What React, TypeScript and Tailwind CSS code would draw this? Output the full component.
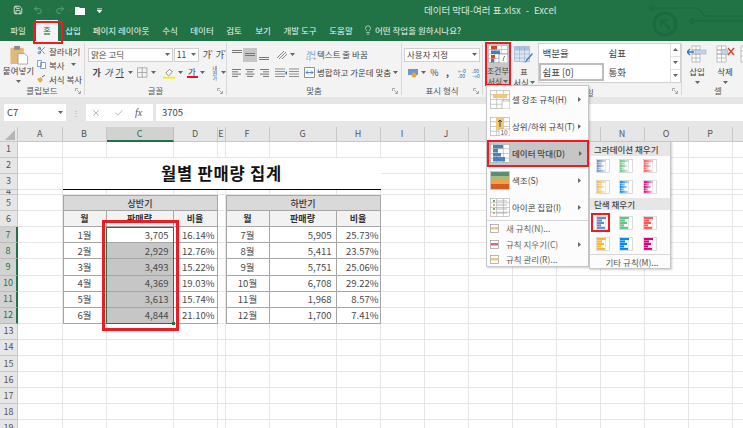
// Excel ribbon with the conditional formatting > data bars menu open
import type { ReactNode } from "react";
import { Check, Lightbulb, Redo2, Save, Scissors, Undo2, X } from "lucide-react";

const letters = ["A", "B", "C", "D", "E", "F", "G", "H", "I", "J", "K", "L", "M", "N", "O", "P", ""];
const rows = Array.from({ length: 19 }, (_, i) => i + 1);

const firstHalf = [
  ["1월", "3,705", "16.14%"],
  ["2월", "2,929", "12.76%"],
  ["3월", "3,493", "15.22%"],
  ["4월", "4,369", "19.03%"],
  ["5월", "3,613", "15.74%"],
  ["6월", "4,844", "21.10%"],
];

const secondHalf = [
  ["7월", "5,905", "25.73%"],
  ["8월", "5,411", "23.57%"],
  ["9월", "5,751", "25.06%"],
  ["10월", "6,708", "29.22%"],
  ["11월", "1,968", "8.57%"],
  ["12월", "1,700", "7.41%"],
];

const tabs = [
  { label: "삽입", w: "w-[30px]" },
  { label: "페이지 레이아웃", w: "w-[66px]" },
  { label: "수식", w: "w-[32px]" },
  { label: "데이터", w: "w-[32px]" },
  { label: "검토", w: "w-[32px]" },
  { label: "보기", w: "w-[26px]" },
  { label: "개발 도구", w: "w-[48px]" },
  { label: "도움말", w: "w-[34px]" },
];

const barColors = ["#638ec6", "#63c384", "#ff555a", "#ffb628", "#008aef", "#d6007b"];

function Caret({ className = "" }: { className?: string }) {
  return (
    <svg width="5" height="3" viewBox="0 0 5 3" className={`shrink-0 ${className}`}>
      <path d="M0 0h5L2.5 3z" fill="#666" />
    </svg>
  );
}

function Launcher() {
  return (
    <svg width="6" height="6" viewBox="0 0 6 6" className="absolute right-[3px] bottom-[1px]">
      <path d="M.5 3V.5H3M5.5 3v2.5H3M2 2l3 3" fill="none" stroke="#888" strokeWidth=".7" />
    </svg>
  );
}

function Group({ width, label, children }: { width: string; label: string; children: ReactNode }) {
  return (
    <div className={`${width} relative flex flex-col border-r border-[#d8d8d8] shrink-0 my-[2px]`}>
      <div className="h-[45px]">{children}</div>
      <div className="text-center text-[8.5px] leading-[9px] text-[#555]">{label}</div>
      <Launcher />
    </div>
  );
}

function Combo({ width, text }: { width: string; text: string }) {
  return (
    <div className={`${width} h-[14px] bg-white border border-[#d0d0d0] flex items-center justify-between px-[2px] text-[8.5px] text-[#444]`}>
      <span>{text}</span>
      <Caret />
    </div>
  );
}

function HLines({ align }: { align: "l" | "c" | "r" }) {
  const x = (w: number) => (align === "l" ? 1 : align === "c" ? (12 - w) / 2 : 11 - w);
  return (
    <svg width="12" height="10" viewBox="0 0 12 10">
      {[9, 6, 9, 6].map((w, i) => (
        <rect key={i} x={x(w)} y={1 + i * 2.3} width={w} height="1" fill="#777" />
      ))}
    </svg>
  );
}

function VLines({ pos }: { pos: number }) {
  return (
    <svg width="12" height="12" viewBox="0 0 12 12">
      <rect x="1" y={pos} width="10" height="1" fill="#777" />
      <rect x="1" y={pos + 2} width="10" height="1" fill="#777" />
    </svg>
  );
}

function CellGrid({ w = 20, h = 18 }: { w?: number; h?: number }) {
  const cx = w / 3;
  const cy = h / 4;
  return (
    <g stroke="#a8a8a8" strokeWidth=".6" fill="#fff">
      <rect x=".5" y=".5" width={w - 1} height={h - 1} />
      {[1, 2].map((i) => (
        <path key={i} d={`M${cx * i} .5V${h - 0.5}`} />
      ))}
      {[1, 2, 3].map((i) => (
        <path key={i} d={`M.5 ${cy * i}H${w - 0.5}`} />
      ))}
    </g>
  );
}

function DataBarIcon({ color, gradient, id }: { color: string; gradient?: boolean; id: string }) {
  return (
    <svg width="14" height="14" viewBox="0 0 14 14">
      <defs>
        <linearGradient id={id}>
          <stop offset="0" stopColor={color} />
          <stop offset="1" stopColor={color} stopOpacity=".25" />
        </linearGradient>
      </defs>
      <rect x=".5" y=".5" width="13" height="13" fill="#fff" stroke="#c4c4c4" strokeWidth=".6" />
      <path d="M5 .5V13.500M9.500 .5V13.500" stroke="#d0d0d0" strokeWidth=".5" />
      {[9, 5, 7, 4, 8].map((w, i) => (
        <rect key={i} x="1" y={1 + i * 2.45} width={w} height="2.1" fill={gradient ? `url(#${id})` : color} />
      ))}
    </svg>
  );
}

function BigMenuItem({ icon, text, active = false, short = false }: { icon: ReactNode; text: string; active?: boolean; short?: boolean }) {
  return (
    <div
      className={`${short ? "h-[26px]" : "h-[27px]"} ${active ? "bg-[#c6c6c6] border-2 border-[#ed1c24] font-medium -mr-[1px]" : "border-2 border-transparent"} flex items-center text-[8.5px] text-[#444]`}
    >
      <span className="w-[22px] flex justify-center shrink-0">{icon}</span>
      <span className="ml-[1px] flex-1 whitespace-nowrap">{text}</span>
      <svg width="3" height="5" viewBox="0 0 3 5" className="mr-[5px]">
        <path d="M0 0l3 2.500L0 5z" fill="#666" />
      </svg>
    </div>
  );
}

function SmallMenuItem({ color, text, arrow = false }: { color: string; text: string; arrow?: boolean }) {
  return (
    <div className="h-[15.5px] flex items-center text-[8.5px] text-[#666] pl-[3px]">
      <svg width="9" height="9" viewBox="0 0 9 9" className="shrink-0">
        <rect x=".5" y=".5" width="8" height="8" fill="#fff" stroke="#999" strokeWidth=".7" />
        <rect x="1" y="3" width="7" height="2.500" fill={color} />
      </svg>
      <span className="ml-[7px] flex-1 whitespace-nowrap">{text}</span>
      {arrow && (
        <svg width="3" height="5" viewBox="0 0 3 5" className="mr-[7px]">
          <path d="M0 0l3 2.500L0 5z" fill="#666" />
        </svg>
      )}
    </div>
  );
}

function MenuIcon({ kind }: { kind: "cell" | "top" | "data" | "scale" | "icons" }) {
  return (
    <svg width="20" height="19" viewBox="0 0 20 19">
      <CellGrid w={20} h={19} />
      {kind === "cell" && (
        <>
          <rect x="3" y="4" width="14" height="4" fill="#f3c775" />
          <rect x="12" y="11" width="8" height="8" fill="#fff" stroke="#999" strokeWidth=".6" />
        </>
      )}
      {kind === "top" && (
        <>
          <rect x="6" y="1" width="8" height="12" fill="#f3c775" />
          <path d="M10 10V3M8 5l2-2 2 2" stroke="#444" strokeWidth="1" fill="none" />
          <rect x="9" y="12" width="11" height="7" fill="#fff" stroke="#999" strokeWidth=".5" />
          <text x="10.500" y="18" fontSize="6.500" fill="#555">10</text>
        </>
      )}
      {kind === "data" && (
        <>
          <rect x="3" y="1" width="10" height="3.500" fill="#4d82b8" />
          <rect x="3" y="5" width="5" height="3.500" fill="#4d82b8" />
          <rect x="3" y="9" width="8" height="3.500" fill="#4d82b8" />
          <rect x="3" y="13" width="12" height="4.500" fill="#4d82b8" />
        </>
      )}
      {kind === "scale" && (
        <>
          <rect x="1" y="1" width="18" height="4" fill="#5a8f77" />
          <rect x="1" y="5" width="18" height="4" fill="#a8ba7c" />
          <rect x="1" y="9" width="18" height="4" fill="#eda54a" />
          <rect x="1" y="13" width="18" height="5" fill="#d85b26" />
        </>
      )}
      {kind === "icons" &&
        [3, 7, 11, 15].map((y, i) => (
          <g key={y}>
            <circle cx="4" cy={y} r="1.100" fill={i % 2 ? "#e0a030" : "#3f9a5a"} />
            <path d={`M6.500 ${y}H17`} stroke="#888" strokeWidth=".6" />
          </g>
        ))}
    </svg>
  );
}

function HeaderCell({ text, selected = false }: { text: string; selected?: boolean }) {
  return (
    <div
      className={`flex items-center justify-center text-[9px] overflow-hidden border-r border-b ${
        selected ? "bg-[#d2d2d2] text-[#217346] border-b-2 border-b-[#217346] border-r-[#bbbbbb]" : "bg-[#e6e6e6] text-[#555] border-[#c8c8c8]"
      }`}
    >
      {text}
    </div>
  );
}

function RowHeader({ n }: { n: number }) {
  const selected = n >= 7 && n <= 12;
  return (
    <div
      className={`flex items-center justify-center text-[9px] overflow-hidden border-b ${
        selected ? "bg-[#d2d2d2] text-[#217346] border-r-2 border-r-[#217346] border-b-[#bbbbbb]" : "bg-[#e6e6e6] text-[#555] border-r border-[#c8c8c8]"
      }`}
    >
      {n}
    </div>
  );
}

function Blank() {
  return <div className="border-r border-b border-[#e6e6e6]" />;
}

function TableBlock({ n, data, label, left }: { n: number; data: string[][]; label: string; left: boolean }) {
  if (n === 5) {
    return (
      <div className="col-span-3 flex items-center justify-center bg-[#d9d9d9] border-l border-r border-b border-t border-[#a6a6a6] text-[9px] font-medium text-[#333]">
        {label}
      </div>
    );
  }
  if (n === 6) {
    return (
      <>
        {["월", "판매량", "비율"].map((t) => (
          <div
            key={t}
            className={`flex items-center justify-center bg-[#f2f2f2] border-r border-b border-[#a6a6a6] text-[9px] font-bold text-[#333] ${t === "월" ? "border-l" : ""}`}
          >
            {t}
          </div>
        ))}
      </>
    );
  }
  const row = data[n - 7];
  const shaded = left && n > 7;
  return (
    <>
      <div className="flex items-center justify-center border-l border-r border-b border-[#a6a6a6] text-[9.5px] text-[#4a4a4a]">{row[0]}</div>
      <div className={`flex items-center justify-end pr-[4px] border-r border-b border-[#a6a6a6] text-[9.5px] text-[#4a4a4a] ${shaded ? "bg-[#c6c6c6]" : ""}`}>
        {row[1]}
      </div>
      <div className={`flex items-center justify-end ${left ? "pr-[2px]" : "pr-[1px]"} border-r border-b border-[#a6a6a6] text-[9.5px] text-[#4a4a4a]`}>{row[2]}</div>
    </>
  );
}

function SheetRow({ n }: { n: number }) {
  const inTable = n >= 5 && n <= 12;
  // columns I..Q stay blank next to the title and the tables
  const blanks = n === 2 || n === 3 || inTable ? 9 : 16;
  return (
    <>
      <RowHeader n={n} />
      <Blank />
      {n === 2 && (
        <div className="col-span-7 row-span-2 flex items-center justify-center border-b border-black text-[16.5px] font-bold text-[#111] tracking-[0.8px]">
          월별 판매량 집계
        </div>
      )}
      {inTable && (
        <>
          <TableBlock n={n} data={firstHalf} label="상반기" left />
          <Blank />
          <TableBlock n={n} data={secondHalf} label="하반기" left={false} />
        </>
      )}
      {Array.from({ length: blanks }).map((_, i) => (
        <Blank key={i} />
      ))}
    </>
  );
}

export default function App() {
  return (
    <div className="relative w-[743px] h-[428px] overflow-hidden bg-white font-['Noto_Sans_CJK_KR','Liberation_Sans',sans-serif] flex flex-col select-none">
      {/* Title bar and tabs */}
      <div className="relative h-[40.5px] bg-[#217346] shrink-0 overflow-hidden">
        <svg width="130" height="40" viewBox="0 0 130 40" className="absolute left-[625px] top-0">
          <g fill="none" stroke="#1c6a3f" strokeWidth="1.500">
            <circle cx="40" cy="24" r="11" strokeWidth="3" />
            <path d="M36 20l9 9M36 20h7M36 20v7" strokeWidth="2.500" />
            <path d="M27 8H72l8 8H118" />
            <path d="M68 21H118" />
            <circle cx="26" cy="8" r="2" />
            <circle cx="67" cy="21" r="2" />
          </g>
        </svg>
        <div className="relative flex items-center h-[20px] pl-[13px] text-white">
          <Save size={10} strokeWidth={1.8} />
          <Undo2 size={10} className="ml-[10px] text-[#6fa387]" />
          <Caret className="ml-[3px] opacity-40" />
          <Redo2 size={10} className="ml-[4px] text-[#6fa387]" />
          <Caret className="ml-[3px] opacity-40" />
          <svg width="10" height="10" viewBox="0 0 10 10" className="ml-[2px]">
            <path d="M0 2h4l1 1h5v7H0z" fill="#fff" />
          </svg>
          <svg width="5" height="5" viewBox="0 0 5 5" className="ml-[12px]">
            <path d="M0 .5h5M0 2h5L2.500 5z" stroke="#fff" strokeWidth=".5" fill="#fff" />
          </svg>
          <span className="ml-[322px] text-[9.5px] text-[#d8e6dd] whitespace-nowrap">데이터 막대-여러 표.xlsx</span>
          <span className="ml-[5px] text-[9.5px] text-[#d8e6dd]">-</span>
          <span className="ml-[5px] text-[9.5px] text-[#d8e6dd]">Excel</span>
        </div>
        <div className="relative flex items-stretch h-[20.5px] pl-[4px] text-[8.5px] text-[#eef5f0]">
          <div className="w-[28px] flex items-center justify-center">파일</div>
          <div className="w-[22px] ml-[4px] flex items-center justify-center bg-[#f3f3f3] text-[#217346]">홈</div>
          {tabs.map((t) => (
            <div key={t.label} className={`${t.w} flex items-center justify-center whitespace-nowrap`}>
              {t.label}
            </div>
          ))}
          <div className="flex items-center ml-[5px] whitespace-nowrap">
            <Lightbulb size={10} strokeWidth={1.5} />
            <span className="ml-[2px]">어떤 작업을 원하시나요?</span>
          </div>
        </div>
      </div>

      {/* Ribbon */}
      <div className="h-[56.5px] bg-[#f3f3f3] flex shrink-0 overflow-hidden">
        <Group width="w-[85px]" label="클립보드">
          <div className="flex h-full">
            <div className="w-[37px] flex flex-col items-center pt-[2px] text-[8.5px] text-[#444]">
              <svg width="20" height="20" viewBox="0 0 20 21">
                <rect x="1" y="3" width="14" height="17" rx="1" fill="#e3b878" />
                <rect x="5" y="1" width="6" height="4" fill="#8a8a8a" />
                <path d="M9 9h7l3 3v8H9z" fill="#fff" stroke="#8a8a8a" strokeWidth=".7" />
              </svg>
              <span className="leading-[11px] whitespace-nowrap">붙여넣기</span>
              <Caret className="mt-[4px]" />
            </div>
            <div className="flex-1 flex flex-col pt-[1px] text-[8.5px] text-[#444] leading-[14px]">
              <div className="flex items-center gap-[3px]">
                <Scissors size={9} className="text-[#3f6f9f]" />
                <span>잘라내기</span>
              </div>
              <div className="flex items-center gap-[3px]">
                <svg width="9" height="9" viewBox="0 0 9 9">
                  <path d="M.5.5h4v6h-4zM3.500 2.500h5v6h-5z" fill="#fff" stroke="#5a7fa8" strokeWidth=".7" />
                </svg>
                <span>복사</span>
                <Caret className="ml-[3px]" />
              </div>
              <div className="flex items-center gap-[3px]">
                <svg width="9" height="9" viewBox="0 0 9 9">
                  <path d="M0 5l4-2 2 3-3 3z" fill="#e3b04b" />
                  <path d="M5 3l3-2" stroke="#666" strokeWidth="1" />
                </svg>
                <span>서식 복사</span>
              </div>
            </div>
          </div>
        </Group>

        <Group width="w-[142px]" label="글꼴">
          <div className="flex flex-col pl-[3px] pt-[5px] gap-[4px] text-[9px] text-[#444]">
            <div className="flex items-center gap-[1px]">
              <Combo width="w-[85px]" text="맑은 고딕" />
              <Combo width="w-[25px]" text="11" />
              <span className="ml-[3px] flex leading-[12px]">
                가<span className="text-[5px] -ml-[1px] leading-[6px]">^</span>
              </span>
              <span className="ml-[2px] flex leading-[12px]">
                가<span className="text-[5px] -ml-[1px] leading-[6px]">ˇ</span>
              </span>
            </div>
            <div className="flex items-center h-[14px] pl-[3px]">
              <span className="w-[12px] text-center font-bold">가</span>
              <span className="w-[13px] text-center italic">가</span>
              <span className="w-[11px] text-center underline">가</span>
              <Caret className="ml-[3px]" />
              <svg width="12" height="11" viewBox="0 0 12 11" className="ml-[4px]">
                <path d="M.5.5h10v10H.5zM5.500.5v10M.5 5.500h10" fill="none" stroke="#999" strokeWidth=".8" />
              </svg>
              <Caret className="ml-[3px]" />
              <svg width="13" height="12" viewBox="0 0 13 12" className="ml-[7px]">
                <path d="M3 6l4-4 3 3-4 4z" fill="#fff" stroke="#666" strokeWidth=".8" />
                <rect x="0" y="10" width="13" height="2" fill="#ffee00" />
              </svg>
              <Caret className="ml-[2px]" />
              <span className="ml-[4px] w-[11px] flex flex-col items-center text-[8.5px] leading-[9px]">
                가<span className="w-[11px] h-[2px] bg-[#e81123]" />
              </span>
              <Caret className="ml-[2px]" />
              <span className="ml-[6px] text-[5px] leading-[5px] w-[9px] text-center">내천<br /><span className="text-[#2f6fb0]">가</span></span>
              <Caret className="ml-[2px]" />
            </div>
          </div>
        </Group>

        <Group width="w-[175px]" label="맞춤">
          <div className="flex flex-col pt-[5px] gap-[4px] text-[8.5px] text-[#444]">
            <div className="flex items-center h-[14px] pl-[3px]">
              <span className="w-[13px] flex justify-center"><VLines pos={1} /></span>
              <span className="w-[14px] h-[14px] flex items-center justify-center bg-[#c6c6c6]"><VLines pos={4} /></span>
              <span className="w-[13px] flex justify-center"><VLines pos={8} /></span>
              <svg width="12" height="11" viewBox="0 0 12 11" className="ml-[6px]">
                <path d="M1 9L8 2M3 10l7-7M6 10l5-5" stroke="#777" strokeWidth=".9" />
              </svg>
              <Caret className="ml-[2px]" />
              <span className="ml-[11px] w-[10px] text-[5px] leading-[5px] text-center text-[#2f6fb0]">가나<br />다→</span>
              <span className="ml-[1px] whitespace-nowrap">텍스트 줄 바꿈</span>
            </div>
            <div className="flex items-center h-[14px] pl-[3px]">
              <span className="w-[13px] flex justify-center"><HLines align="l" /></span>
              <span className="w-[14px] flex justify-center"><HLines align="c" /></span>
              <span className="w-[13px] flex justify-center"><HLines align="r" /></span>
              <svg width="24" height="10" viewBox="0 0 24 10" className="ml-[5px]">
                <path d="M0 1h10M0 3.500h10M0 6h10M0 8.500h10M12 5h-1M14 1h10M14 3.500h10M14 6h10M14 8.500h10" stroke="#777" strokeWidth=".8" />
                <path d="M10 5l2-2v4zM12.500 5l-2 2" fill="#2f6fb0" />
              </svg>
              <svg width="11" height="11" viewBox="0 0 11 11" className="ml-[5px]">
                <path d="M.5.5h10v10H.5z" fill="#fff" stroke="#777" strokeWidth=".8" />
                <path d="M2 5.500h7M2 5.500l2-2M2 5.500l2 2M9 5.500l-2-2M9 5.500l-2 2" stroke="#2f6fb0" strokeWidth=".8" fill="none" />
              </svg>
              <span className="ml-[2px] whitespace-nowrap">병합하고 가운데 맞춤</span>
              <Caret className="ml-[2px]" />
            </div>
          </div>
        </Group>

        <Group width="w-[81px]" label="표시 형식">
          <div className="flex flex-col pl-[2px] pt-[5px] gap-[4px] text-[9px] text-[#444]">
            <Combo width="w-[76px]" text="사용자 지정" />
            <div className="flex items-center h-[14px] pl-[4px]">
              <svg width="11" height="10" viewBox="0 0 11 10">
                <rect x="0" y="1" width="10" height="6" fill="#6d98c9" />
                <circle cx="6" cy="7" r="2.500" fill="#e8a33a" />
              </svg>
              <Caret className="ml-[2px]" />
              <span className="ml-[4px] w-[9px] text-center">%</span>
              <span className="ml-[4px] w-[9px] text-center font-bold">,</span>
              <span className="ml-[6px] w-[10px] text-[5px] leading-[5px] text-[#2f6fb0]">←0<br />.00</span>
              <span className="ml-[4px] w-[10px] text-[5px] leading-[5px] text-[#2f6fb0]">.00<br />→0</span>
            </div>
          </div>
        </Group>

        <Group width="w-[199px]" label="스타일">
          <div className="flex h-full pl-[2px]">
            <div className="w-[25.5px] h-[44px] -mt-[1px] border-2 border-[#ed1c24] bg-[#c6c6c6] flex flex-col items-center text-[8px] leading-[11px] text-[#444] shrink-0">
              <svg width="20" height="18" viewBox="0 0 20 18" className="mt-[1px] mb-[2px] shrink-0">
                <CellGrid w={20} h={18} />
                <rect x="3" y="1" width="6" height="3.500" fill="#d04a2a" />
                <rect x="3" y="5.500" width="9" height="3.500" fill="#3f7fc0" />
                <rect x="3" y="10" width="4" height="3.500" fill="#d04a2a" />
                <rect x="3" y="14" width="3" height="3.500" fill="#3f7fc0" />
                <rect x="11" y="9" width="9" height="9" fill="#fff" stroke="#777" strokeWidth=".6" />
                <path d="M15 16c.5-2 .5-4 2-5" stroke="#444" strokeWidth=".7" fill="none" />
              </svg>
              <span className="whitespace-nowrap">조건부</span>
              <span className="flex items-center gap-[1px]">서식<Caret /></span>
            </div>
            <div className="w-[25px] flex flex-col items-center text-[8.5px] leading-[11px] text-[#444] shrink-0 ml-[1px]">
              <svg width="20" height="19" viewBox="0 0 20 19" className="mt-[3px]">
                <path d="M.5.5h15v15H.5z" fill="#dbe5f1" stroke="#8aa7c7" strokeWidth=".6" />
                <rect x=".5" y=".5" width="15" height="4" fill="#a9c1dc" />
                <path d="M5.500 .5v15M10.500 .5v15M.5 8h15M.5 12h15" stroke="#8aa7c7" strokeWidth=".5" />
                <path d="M8 17c3 0 4-1 4-3l6-7 1 1-6 7c-1 2-3 2-5 2z" fill="#3f7fc0" />
              </svg>
              <span className="mt-[1px]">표</span>
              <span className="flex items-center gap-[1px]">서식<Caret /></span>
            </div>
            <div className="ml-[1px] w-[144px] h-[40px] bg-white border border-[#d0d0d0] flex text-[9.5px] text-[#444]">
              <div className="flex-1 grid grid-cols-[65px_1fr] grid-rows-2 items-center">
                <span className="pl-[4px]">백분율</span>
                <span className="pl-[5px]">쉼표</span>
                <span className="h-[18px] border-2 border-[#bdbdbd] pl-[2px] flex items-center">쉼표 [0]</span>
                <span className="pl-[5px]">통화</span>
              </div>
              <div className="w-[10px] flex flex-col border-l border-[#e0e0e0]">
                <span className="flex-1 flex items-center justify-center border-b border-[#e0e0e0]"><Caret className="rotate-180" /></span>
                <span className="flex-1 flex items-center justify-center border-b border-[#e0e0e0]"><Caret /></span>
                <span className="flex-1 flex items-center justify-center"><Caret /></span>
              </div>
            </div>
          </div>
        </Group>

        <div className="flex-1 relative flex flex-col my-[2px]">
          <div className="h-[45px] flex pt-[2px] pl-[1px] text-[8.5px] leading-[11px] text-[#444]">
            <div className="w-[26px] ml-[1px] flex flex-col items-center">
              <svg width="20" height="18" viewBox="0 0 20 18" className="mb-[3px]">
                <path d="M5 1h8v4H5zM5 5h8v4H5zM5 9h8v8H5zM9 1v16M5 13h8" fill="#fff" stroke="#999" strokeWidth=".6" />
                <rect x="8" y="5" width="11" height="4" fill="#c5d5e8" stroke="#8aa7c7" strokeWidth=".5" />
                <path d="M7 7H0M3 4L0 7l3 3" stroke="#2f77c0" strokeWidth="1.300" fill="none" />
              </svg>
              <span>삽입</span>
              <Caret className="mt-[4px]" />
            </div>
            <div className="w-[26px] ml-[2px] flex flex-col items-center">
              <svg width="20" height="18" viewBox="0 0 20 18" className="mb-[3px]">
                <path d="M2 1h9v4H2zM2 5h9v4H2zM2 9h9v8H2zM6.500 1v16M2 13h9" fill="#fff" stroke="#999" strokeWidth=".6" />
                <rect x="6" y="5" width="7" height="4" fill="#c5d5e8" stroke="#8aa7c7" strokeWidth=".5" />
                <path d="M13 3l6 7M19 3l-6 7" stroke="#d8432b" strokeWidth="1.400" />
              </svg>
              <span>삭제</span>
              <Caret className="mt-[4px]" />
            </div>
            <div className="ml-[2px] w-[12px] overflow-hidden">
              <svg width="20" height="18" viewBox="0 0 20 18" className="mb-[3px]">
                <path d="M1 1h12v16H1zM6 1v16M1 6h12M1 11h12" fill="#fff" stroke="#999" strokeWidth=".6" />
              </svg>
            </div>
          </div>
          <div className="text-center text-[8.5px] leading-[9px] text-[#555] pl-[2px]">셀</div>
        </div>
      </div>

      {/* Formula bar */}
      <div className="h-[30px] bg-[#e6e6e6] shrink-0 flex pt-[7px] text-[9.5px] text-[#444]">
        <div className="ml-[4px] w-[62px] h-[17px] bg-white flex items-center justify-between px-[3px]">
          <span>C7</span>
          <Caret />
        </div>
        <div className="w-[20px] flex items-center justify-center text-[#aaa] text-[8px] h-[17px]">⋮</div>
        <div className="w-[67px] h-[17px] bg-white flex items-center text-[#aaa]">
          <X size={10} className="ml-[5px]" />
          <Check size={10} className="ml-[13px]" />
          <span className="ml-[11px] italic font-['Liberation_Serif',serif] text-[#555] text-[10px]">fx</span>
        </div>
        <div className="flex-1 ml-[3px] h-[17px] bg-white flex items-center pl-[6px]">3705</div>
      </div>

      {/* Sheet */}
      <div className="flex-1 min-h-0 grid grid-cols-[18px_44.5px_44px_67px_44px_8px_44px_67px_44px_44px_44px_44px_44px_44px_44px_44px_44px_44px] grid-rows-[14.6px_16px_16px_16px_5.7px_16.05px_16.05px_16.05px_16.05px_16.05px_16.05px_16.05px_16.05px_16.05px_16.05px_16.05px_16.05px_16.05px_16.05px_16.05px]">
        <div className="relative bg-[#e6e6e6] border-r border-b border-[#c8c8c8]">
          <div className="absolute right-[2px] bottom-[1px] w-0 h-0 border-l-[10px] border-l-transparent border-b-[10px] border-b-[#b5b5b5]" />
        </div>
        {letters.map((l, i) => (
          <HeaderCell key={i} text={l} selected={l === "C"} />
        ))}
        {rows.map((n) => (
          <SheetRow key={n} n={n} />
        ))}
      </div>

      {/* Selection and red annotation boxes */}
      <div className="absolute left-[106px] top-[227px] w-[68px] h-[97px] border border-[#217346]">
        <div className="absolute -right-[2px] -bottom-[2px] w-[3px] h-[3px] bg-[#217346]" />
      </div>
      <div className="absolute left-[102px] top-[219.500px] w-[77px] h-[111.500px] border-[3px] border-[#ed1c24]" />
      <div className="absolute left-[33px] top-[21px] w-[30px] h-[23px] border-[2px] border-[#ed1c24]" />

      {/* Conditional formatting menu */}
      <div className="absolute left-[486px] top-[85px] w-[103px] h-[182px] bg-[#fcfcfc] border border-[#c6c6c6] shadow-[1px_1px_2px_rgba(0,0,0,0.2)]">
        <BigMenuItem icon={<MenuIcon kind="cell" />} text="셀 강조 규칙(H)" />
        <BigMenuItem icon={<MenuIcon kind="top" />} text="상위/하위 규칙(T)" />
        <BigMenuItem active icon={<MenuIcon kind="data" />} text="데이터 막대(D)" />
        <BigMenuItem icon={<MenuIcon kind="scale" />} text="색조(S)" />
        <BigMenuItem short icon={<MenuIcon kind="icons" />} text="아이콘 집합(I)" />
        <div className="border-t border-[#d8d8d8]" />
        <SmallMenuItem color="#f3c775" text="새 규칙(N)..." />
        <SmallMenuItem color="#e0607e" text="규칙 지우기(C)" arrow />
        <SmallMenuItem color="#f3c775" text="규칙 관리(R)..." />
      </div>

      {/* Data bars submenu */}
      <div className="absolute left-[589px] top-[141px] w-[82px] h-[128px] bg-[#fcfcfc] border border-[#c6c6c6] shadow-[1px_1px_2px_rgba(0,0,0,0.2)] text-[8.5px] text-[#444]">
        <div className="h-[14px] bg-[#e6e6e6] flex items-center pl-[4px] font-medium">그라데이션 채우기</div>
        <div className="grid grid-cols-3 justify-items-center gap-y-[7px] pt-[3px] pb-[4px] pl-[1px] pr-[8px]">
          {barColors.map((c, i) => (
            <DataBarIcon key={c} color={c} gradient id={`grad-${i}`} />
          ))}
        </div>
        <div className="h-[12px] bg-[#e6e6e6] flex items-center pl-[4px] font-medium">단색 채우기</div>
        <div className="relative grid grid-cols-3 justify-items-center gap-y-[7px] pt-[6px] pb-[3px] pl-[1px] pr-[8px]">
          {barColors.map((c, i) => (
            <DataBarIcon key={c} color={c} id={`solid-${i}`} />
          ))}
          <div className="absolute left-[1px] top-[3px] w-[19px] h-[19px] border-2 border-[#ed1c24]" />
        </div>
        <div className="border-t border-[#d8d8d8] h-[16px] flex items-center justify-center pl-[4px] text-[#555]">기타 규칙(M)...</div>
      </div>
    </div>
  );
}
